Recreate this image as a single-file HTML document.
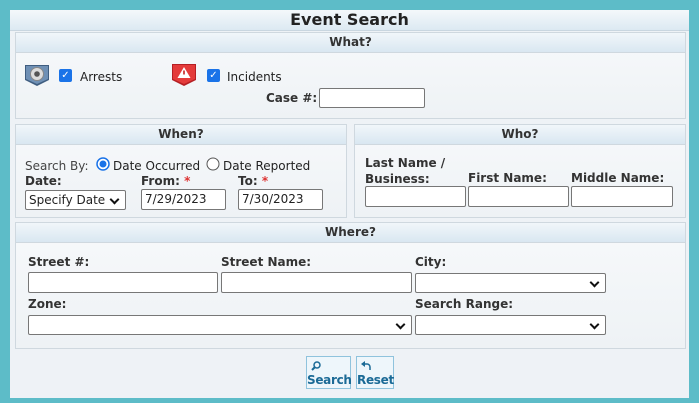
<!DOCTYPE html>
<html><head><style>
body{margin:0;width:699px;height:403px;background:#5dbcc8;font-family:"DejaVu Sans","Liberation Sans",sans-serif;color:#222;position:relative;overflow:hidden}
.a{position:absolute}
.panel{left:10px;top:10px;width:679px;height:388px;background:#eef2f6}
.title{left:10px;top:10px;width:679px;height:20px;background:linear-gradient(#f4f8fb,#dce9f2);text-align:center;font-weight:bold;font-size:16px;line-height:20px;color:#222;border-bottom:1px solid #c9d6e0}
.box{border:1px solid #cfd8df;background:linear-gradient(#f7f9fb,#eef2f5)}
.hd{background:linear-gradient(#f1f6fa,#d9e7f1);text-align:center;font-weight:bold;font-size:12px;line-height:19px;height:19px;border-bottom:1px solid #cfd8df;color:#333}
.t{font-size:12px;white-space:nowrap}
.b{font-weight:bold;color:#333}
.in{background:#fff;border:1px solid #777;border-radius:2px;box-sizing:border-box;height:20px;font-size:12px;line-height:18px;padding-left:3px}
.cb{width:13px;height:13px;background:#1a73e8;border-radius:2px;color:#fff;font-size:10px;line-height:13px;text-align:center}
.sel::after{content:"";position:absolute;right:7px;top:5px;width:5px;height:5px;border-right:2px solid #111;border-bottom:2px solid #111;transform:rotate(45deg)}
.star{color:#d33}
.btn{border:1px solid #8fc3dd;background:#eef6fb;color:#1b6a96;font-weight:bold;font-size:12px;text-align:center;box-sizing:border-box;letter-spacing:-0.3px}
</style></head><body>
<div class="a panel"></div>
<div class="a title">Event Search</div>

<div class="a box" style="left:15px;top:32px;width:669px;height:85px"><div class="hd">What?</div></div>
<svg class="a" style="left:24px;top:63px" width="26" height="24"><path d="M1 2h24v15l-12 6-12-6z" fill="#3f5d80"/><path d="M2 3h22v13l-11 5-11-5z" fill="#6f90b5"/><circle cx="13" cy="11" r="6.5" fill="#ddd" stroke="#888"/><circle cx="13" cy="11" r="2.8" fill="#555"/></svg>
<div class="a cb" style="left:59px;top:69px">✓</div>
<div class="a t" style="left:80px;top:70px">Arrests</div>
<svg class="a" style="left:171px;top:62px" width="26" height="25"><path d="M1 2h24v16l-12 6-12-6z" fill="#b51f24"/><path d="M2 3h22v14l-11 5-11-5z" fill="#e43b3b"/><path d="M13 5l6.5 11h-13z" fill="#fff"/><rect x="12.3" y="8.5" width="1.4" height="4" fill="#b00"/></svg>
<div class="a cb" style="left:207px;top:69px">✓</div>
<div class="a t" style="left:227px;top:70px">Incidents</div>
<div class="a t b" style="left:266px;top:91px">Case #:</div>
<div class="a in" style="left:319px;top:88px;width:106px"></div>

<div class="a box" style="left:15px;top:124px;width:330px;height:92px"><div class="hd">When?</div></div>
<div class="a t" style="left:25px;top:159px;color:#444">Search By:</div>
<svg class="a" style="left:96px;top:157px" width="14" height="14"><circle cx="7" cy="7" r="6" fill="#fff" stroke="#1a73e8" stroke-width="1.5"/><circle cx="7" cy="7" r="3.5" fill="#1a73e8"/></svg>
<div class="a t" style="left:113px;top:159px">Date Occurred</div>
<svg class="a" style="left:206px;top:157px" width="14" height="14"><circle cx="7" cy="7" r="6" fill="#fff" stroke="#555"/></svg>
<div class="a t" style="left:223px;top:159px">Date Reported</div>
<div class="a t b" style="left:25px;top:174px">Date:</div>
<div class="a t b" style="left:141px;top:174px">From: <span class="star">*</span></div>
<div class="a t b" style="left:238px;top:174px">To: <span class="star">*</span></div>
<div class="a in sel" style="left:25px;top:190px;width:101px">Specify Date</div>
<div class="a in" style="left:141px;top:189px;width:85px;height:21px">7/29/2023</div>
<div class="a in" style="left:238px;top:189px;width:85px;height:21px">7/30/2023</div>

<div class="a box" style="left:354px;top:124px;width:330px;height:92px"><div class="hd">Who?</div></div>
<div class="a t b" style="left:365px;top:155px;line-height:16px">Last Name /<br>Business:</div>
<div class="a t b" style="left:468px;top:171px">First Name:</div>
<div class="a t b" style="left:571px;top:171px">Middle Name:</div>
<div class="a in" style="left:365px;top:186px;width:101px;height:21px"></div>
<div class="a in" style="left:468px;top:186px;width:101px;height:21px"></div>
<div class="a in" style="left:571px;top:186px;width:102px;height:21px"></div>

<div class="a box" style="left:15px;top:222px;width:669px;height:125px"><div class="hd">Where?</div></div>
<div class="a t b" style="left:28px;top:255px">Street #:</div>
<div class="a t b" style="left:221px;top:255px">Street Name:</div>
<div class="a t b" style="left:415px;top:255px">City:</div>
<div class="a in" style="left:28px;top:272px;width:190px;height:21px"></div>
<div class="a in" style="left:221px;top:272px;width:191px;height:21px"></div>
<div class="a in sel" style="left:415px;top:273px;width:191px"></div>
<div class="a t b" style="left:28px;top:297px">Zone:</div>
<div class="a t b" style="left:415px;top:297px">Search Range:</div>
<div class="a in sel" style="left:28px;top:315px;width:384px"></div>
<div class="a in sel" style="left:415px;top:315px;width:191px"></div>

<div class="a btn" style="left:306px;top:356px;width:45px;height:33px"><svg width="12" height="12" style="display:block;margin:3px 0 0 3px"><circle cx="7" cy="5" r="3" fill="none" stroke="#1b6a96" stroke-width="1.5"/><path d="M5 7L2 10" stroke="#1b6a96" stroke-width="2"/></svg><div style="line-height:16px">Search</div></div>
<div class="a btn" style="left:356px;top:356px;width:38px;height:33px"><svg width="12" height="12" style="display:block;margin:3px 0 0 3px"><path d="M4 4h3a3 3 0 0 1 3 3v3" fill="none" stroke="#1b6a96" stroke-width="1.5"/><path d="M1 4l4-3v6z" fill="#1b6a96"/></svg><div style="line-height:16px">Reset</div></div>
</body></html>
